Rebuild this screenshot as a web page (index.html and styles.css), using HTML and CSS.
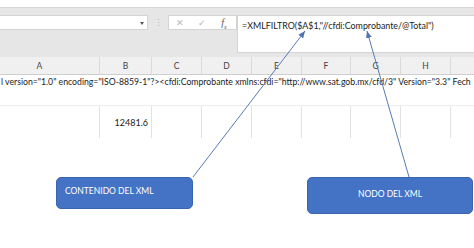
FILE: index.html
```html
<!DOCTYPE html>
<html lang="es">
<head>
    <meta charset="UTF-8">
    <meta name="viewport" content="width=device-width, initial-scale=1.0">
    <title>XMLFILTRO</title>
    <link rel="stylesheet" href="styles.css">
</head>
<body>
    <div class="sheet">
        <div class="ribbon-edge"></div>

        <div class="formula-area">
            <div class="name-box"><span class="caret"></span></div>
            <div class="grip">⋮</div>
            <div class="fx-tools">
                <span class="tool">✕</span>
                <span class="tool">✓</span>
                <span class="tool fx">f<sub>x</sub></span>
            </div>
            <div class="formula-input">=XMLFILTRO($A$1,"//cfdi:Comprobante/@Total")</div>
        </div>

        <div class="col-headers">
            <div class="col col-a">A</div>
            <div class="col col-b">B</div>
            <div class="col col-c">C</div>
            <div class="col col-d">D</div>
            <div class="col col-e">E</div>
            <div class="col col-f">F</div>
            <div class="col col-g">G</div>
            <div class="col col-h">H</div>
            <div class="col col-i"></div>
        </div>

        <div class="row row-1">
            <span class="overflow-text">l version="1.0" encoding="ISO-8859-1"?&gt;&lt;cfdi:Comprobante xmlns:cfdi="http://www.sat.gob.mx/cfd/3" Version="3.3" Fech</span>
        </div>

        <div class="row row-2">
            <div class="cell col-a"></div>
            <div class="cell col-b number">12481.6</div>
            <div class="cell col-c"></div>
            <div class="cell col-d"></div>
            <div class="cell col-e"></div>
            <div class="cell col-f"></div>
            <div class="cell col-g"></div>
            <div class="cell col-h"></div>
            <div class="cell col-i"></div>
        </div>

        <!-- callouts drawn over the sheet -->
        <div class="callout callout-content">CONTENIDO DEL XML</div>
        <div class="callout callout-node">NODO DEL XML</div>

        <svg class="arrows" width="474" height="248" viewBox="0 0 474 248">
            <defs>
                <marker id="head" markerWidth="8" markerHeight="8" refX="7" refY="4" orient="auto" markerUnits="userSpaceOnUse">
                    <path d="M0,1 L7,4 L0,7 Z" fill="#4f74b3"/>
                </marker>
            </defs>
            <line x1="193" y1="177" x2="305" y2="31" stroke="#5a7bb5" stroke-width="1" marker-end="url(#head)"/>
            <line x1="409" y1="177" x2="367" y2="31" stroke="#5a7bb5" stroke-width="1" marker-end="url(#head)"/>
        </svg>
    </div>
</body>
</html>
```

FILE: styles.css
```css
/* General */
body {
    margin: 0;
    padding: 0;
    background-color: #fff;
    font-family: 'Lato', 'Liberation Sans', sans-serif;
    color: #333;
}

.sheet {
    position: relative;
    width: 474px;
    height: 248px;
    overflow: hidden;
    background-color: #fff;
}

.ribbon-edge {
    height: 7px;
    background-color: #fff;
    border-bottom: 1px solid #d6d6d6;
}

/* Formula bar */
.formula-area {
    display: flex;
    align-items: flex-start;
    height: 49px;
    padding-top: 7px;
    box-sizing: border-box;
    background-color: #e6e6e6;
}

.name-box {
    position: relative;
    width: 148px;
    height: 15px;
    background-color: #fff;
    border: 1px solid #d4d4d4;
    border-left: none;
    box-sizing: border-box;
}

.caret {
    position: absolute;
    right: 3px;
    top: 6px;
    border-left: 2px solid transparent;
    border-right: 2px solid transparent;
    border-top: 3px solid #555;
}

.grip {
    width: 20px;
    text-align: center;
    font-size: 9px;
    line-height: 15px;
    color: #b8b8b8;
}

.fx-tools {
    display: flex;
    width: 69px;
    height: 15px;
    background-color: #fff;
    border: 1px solid #d4d4d4;
    box-sizing: border-box;
}

.tool {
    width: 22px;
    text-align: center;
    font-size: 9px;
    line-height: 13px;
    color: #b4b4b4;
}

.tool.fx {
    font-family: 'Liberation Serif', serif;
    font-style: italic;
    color: #555;
    font-size: 10px;
}

.tool.fx sub {
    font-size: 6px;
}

.formula-input {
    flex: 1;
    height: 38px;
    padding: 3px 4px;
    box-sizing: border-box;
    background-color: #fff;
    border: 1px solid #d4d4d4;
    border-right: none;
    font-size: 8.9px;
    line-height: 14px;
    color: #222;
    white-space: nowrap;
}

/* Grid */
.col-headers,
.row {
    display: flex;
    margin-left: -20px;
}

.col-headers {
    height: 17px;
    background-color: #f0f0f0;
    border-bottom: 1px solid #cfcfcf;
}

.col {
    flex: none;
    text-align: center;
    font-size: 8.5px;
    line-height: 19px;
    color: #444;
    border-right: 1px solid #dadada;
    box-sizing: border-box;
}

.col-a { width: 120px; }
.col-b { width: 52px; }
.col-c { width: 50px; }
.col-d { width: 50px; }
.col-e { width: 50px; }
.col-f { width: 49px; }
.col-g { width: 50px; }
.col-h { width: 50px; }
.col-i { width: 50px; }

.row-1 {
    height: 30px;
    margin-left: 0;
    border-bottom: 1px solid #ededed;
}

.overflow-text {
    padding-left: 1px;
    font-size: 8.7px;
    line-height: 14px;
    color: #222;
    white-space: nowrap;
}

.row-2 {
    height: 32px;
}

.cell {
    flex: none;
    height: 100%;
    box-sizing: border-box;
    border-right: 1px solid #e2e2e2;
}

.cell.number {
    display: flex;
    align-items: flex-end;
    justify-content: flex-end;
    padding: 0 3px 10px 0;
    font-size: 9px;
    color: #222;
}

/* Callouts */
.callout {
    position: absolute;
    top: 177px;
    box-sizing: border-box;
    background-color: #4472c4;
    border: 1px solid #3a64ad;
    border-radius: 5px;
    color: #fff;
    font-size: 8.5px;
}

.callout-content {
    left: 56px;
    width: 137px;
    height: 32px;
    padding: 8px 0 0 8px;
}

.callout-node {
    left: 307px;
    width: 166px;
    height: 37px;
    padding-top: 11px;
    text-align: center;
}

.arrows {
    position: absolute;
    top: 0;
    left: 0;
    pointer-events: none;
}
```
